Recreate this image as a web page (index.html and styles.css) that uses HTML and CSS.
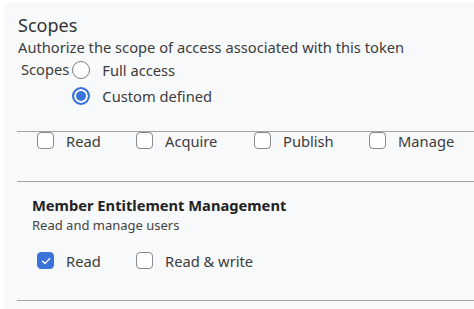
FILE: index.html
```html
<!DOCTYPE html>
<html lang="en">
<head>
    <meta charset="UTF-8">
    <meta name="viewport" content="width=device-width, initial-scale=1.0">
    <title>Scopes</title>
    <link rel="stylesheet" href="styles.css">
</head>
<body>
    <div class="panel">
        <div class="intro">
            <h2 class="title">Scopes</h2>
            <div class="desc">Authorize the scope of access associated with this token</div>
            <div class="scope-row">
                <span class="scope-label">Scopes</span>
                <div class="radios">
                    <label class="radio"><span class="radio-dot"></span>Full access</label>
                    <label class="radio"><span class="radio-dot checked"></span>Custom defined</label>
                </div>
            </div>
        </div>

        <div class="section first">
            <div class="checks">
                <label class="check w-read"><span class="box"></span>Read</label>
                <label class="check w-acquire"><span class="box"></span>Acquire</label>
                <label class="check w-publish"><span class="box"></span>Publish</label>
                <label class="check"><span class="box"></span>Manage</label>
            </div>
        </div>

        <div class="section">
            <div class="group">
                <div class="group-title">Member Entitlement Management</div>
                <div class="group-desc">Read and manage users</div>
                <div class="checks">
                    <label class="check w-read">
                        <span class="box checked">
                            <svg width="12" height="12" viewBox="0 0 12 12"><path d="M2.5 6.2 L5 8.6 L9.6 3.6" fill="none" stroke="#fff" stroke-width="1.4" stroke-linecap="round" stroke-linejoin="round"/></svg>
                        </span>Read
                    </label>
                    <label class="check"><span class="box"></span>Read &amp; write</label>
                </div>
            </div>
        </div>
        <div class="section end"></div>
    </div>
</body>
</html>
```

FILE: styles.css
```css
body {
    margin: 0;
    background: #ffffff;
    font-family: 'Noto Sans', 'Open Sans', sans-serif;
    color: #333;
    overflow: hidden;
}

.panel {
    margin: 3px 0 0 4px;
    height: 306px;
    background: #f8f9fb;
}

.intro {
    padding: 10px 0 0 14px;
    height: 118px;
}

.title {
    margin: 0;
    font-size: 18px;
    font-weight: 400;
    line-height: 24px;
    color: #333;
}

.desc {
    font-size: 14.7px;
    line-height: 20px;
    color: #3c3c3c;
}

.scope-row {
    display: flex;
    align-items: flex-start;
}

.scope-label {
    padding: 2px 0 0 3px;
    font-size: 14.7px;
    line-height: 20px;
    color: #3c3c3c;
}

.radios {
    display: flex;
    flex-direction: column;
    gap: 6px;
    padding-top: 3px;
    margin-left: 3px;
}

.radio {
    display: flex;
    align-items: center;
    font-size: 14.7px;
    line-height: 20px;
    color: #3c3c3c;
}

.radio-dot {
    box-sizing: border-box;
    width: 18px;
    height: 18px;
    margin-right: 12px;
    border: 1px solid #808080;
    border-radius: 50%;
    background: #fff;
}

.radio-dot.checked {
    border: 2px solid #3a73d9;
    box-shadow: inset 0 0 0 2px #fff;
    background: #3a73d9;
}

.section {
    margin-left: 13px;
    border-top: 1.5px solid #a2a2a2;
}

.section.first {
    height: 48.5px;
}

.section.end {
    height: 10px;
}

.group {
    padding: 13px 0 0 15px;
    height: 105.5px;
}

.group-title {
    font-size: 14.7px;
    font-weight: 700;
    line-height: 20px;
    color: #222;
}

.group-desc {
    font-size: 13px;
    line-height: 20px;
    color: #444;
}

.checks {
    display: flex;
    align-items: center;
}

.section.first .checks {
    padding: 0 0 0 20px;
    height: 17px;
}

.group .checks {
    margin-top: 9px;
    padding-left: 5px;
    height: 34px;
}

.check {
    display: flex;
    align-items: center;
    font-size: 14.7px;
    line-height: 20px;
    color: #3c3c3c;
}

.w-read {
    width: 99px;
}

.w-acquire {
    width: 118px;
}

.w-publish {
    width: 115px;
}

.box {
    box-sizing: border-box;
    width: 17px;
    height: 17px;
    margin-right: 12px;
    border: 1px solid #8a8a8a;
    border-radius: 4px;
    background: #fff;
    display: flex;
    align-items: center;
    justify-content: center;
}

.box.checked {
    border-color: #3a73d9;
    background: #3a73d9;
}
```
